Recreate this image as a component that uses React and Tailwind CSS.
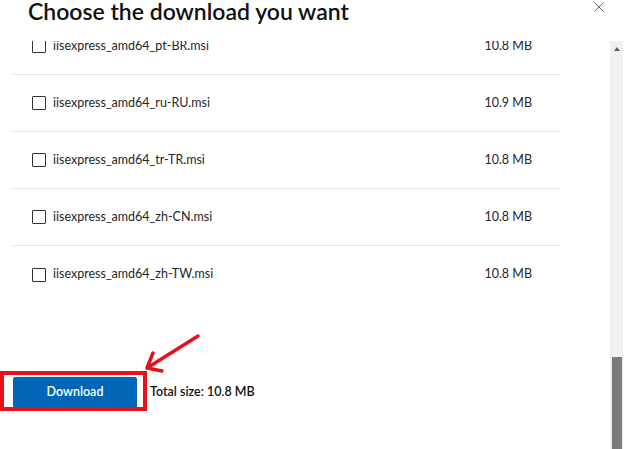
import React from "react";

const files = [
  { name: "iisexpress_amd64_pt-BR.msi", size: "10.8 MB" },
  { name: "iisexpress_amd64_ru-RU.msi", size: "10.9 MB" },
  { name: "iisexpress_amd64_tr-TR.msi", size: "10.8 MB" },
  { name: "iisexpress_amd64_zh-CN.msi", size: "10.8 MB" },
  { name: "iisexpress_amd64_zh-TW.msi", size: "10.8 MB" },
];

const FileRow = ({ file, last }) => (
  <div
    className={`flex items-center h-[57px] pl-[20px] pr-[28px] ${
      last ? "" : "border-b border-[#e6e6e6]"
    }`}
  >
    <span className="w-[14px] h-[14px] border border-[#333] rounded-[1px] shrink-0" />
    <span className="ml-[7px] flex-1 text-[12.5px] text-[#262626]">{file.name}</span>
    <span className="text-[12.5px] text-[#262626]">{file.size}</span>
  </div>
);

const App = () => {
  return (
    <div
      className="relative w-[640px] h-[449px] bg-white overflow-hidden"
      style={{ fontFamily: 'Lato, "Open Sans", sans-serif' }}
    >
      {/* dialog header */}
      <div className="relative flex items-start h-[41px]">
        <h2 className="ml-[28px] mt-[-3px] text-[23px] leading-[28px] font-semibold text-[#111]">
          Choose the download you want
        </h2>
        <button className="absolute right-[36px] top-[2px] w-[10px] h-[10px]">
          <svg viewBox="0 0 10 10" className="w-[10px] h-[10px]">
            <path d="M0.5 0.5 L9.5 9.5 M9.5 0.5 L0.5 9.5" stroke="#6b6b6b" strokeWidth="1" />
          </svg>
        </button>
      </div>

      <div className="flex h-[408px]">
        {/* scrolled dialog body */}
        <div className="w-[610px] overflow-hidden pl-[12px]">
          <div className="mt-[-23px] w-[548px]">
            {files.map((f, i) => (
              <FileRow key={f.name} file={f} last={i === files.length - 1} />
            ))}
          </div>
          <div className="mt-[74px] flex items-center gap-[13px] pl-[1px]">
            <button className="w-[124px] h-[31px] bg-[#0067b8] text-white text-[12.5px] font-semibold rounded-[2px]">
              Download
            </button>
            <span className="text-[12.5px] font-semibold text-[#111]">Total size: 10.8 MB</span>
          </div>
        </div>

        {/* scrollbar */}
        <div className="w-[13px] bg-[#f0f0f0] flex flex-col justify-between items-center">
          <svg viewBox="0 0 6 4" className="w-[6px] h-[4px] mt-[6px]">
            <path d="M0 4 L3 0 L6 4 Z" fill="#606060" />
          </svg>
          <div className="w-[10px] h-[92px] bg-[#7b7b7b]" />
        </div>
      </div>

      {/* annotation: red box and arrow */}
      <div className="absolute left-0 top-[371px] w-[147px] h-[40px] border-[4px] border-[#e8101c] pointer-events-none" />
      <svg
        className="absolute left-[140px] top-[330px] pointer-events-none"
        width="65"
        height="45"
        viewBox="0 0 65 45"
      >
        <path
          d="M58 6 L7 38 M7 38 L13 23 M7 38 L22 41"
          stroke="#e8101c"
          strokeWidth="3.5"
          strokeLinecap="round"
          strokeLinejoin="round"
          fill="none"
        />
      </svg>
    </div>
  );
};

export default App;
